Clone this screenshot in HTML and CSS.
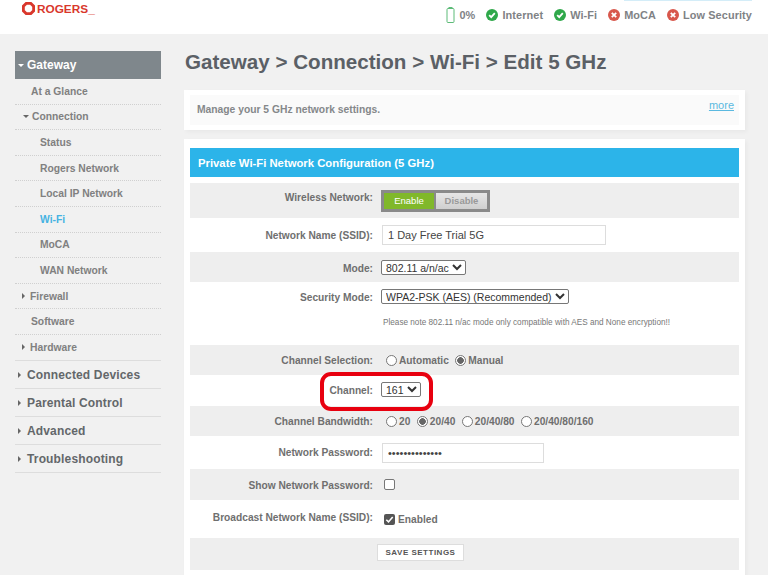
FILE: index.html
```html
<!DOCTYPE html>
<html lang="en">
<head>
<meta charset="utf-8">
<title>Gateway &gt; Connection &gt; Wi-Fi &gt; Edit 5 GHz</title>
<link rel="stylesheet" href="styles.css">
</head>
<body>
<header class="top">
  <div class="logo">
    <svg class="logo-mark" viewBox="0 0 14 14" width="13" height="13"><path d="M4.500 1.500h5L12.500 4.500v5L9.500 12.500h-5L1.500 9.500v-5z" fill="none" stroke="#d9372c" stroke-width="3"/></svg>
    <span class="logo-text">ROGERS_</span>
  </div>
  <div class="top-right">
    <div class="top-links"></div>
    <div class="status">
      <span class="stat">
        <svg viewBox="0 0 9 17" width="9" height="17"><path d="M2.500 .5h4M1 2.500q0-1 1-1h5q1 0 1 1v12q0 1-1 1H2q-1 0-1-1z" fill="none" stroke="#5dbb78" stroke-width="1"/></svg>
        0%
      </span>
      <span class="stat">
        <svg viewBox="0 0 12 12" width="12" height="12"><circle cx="6" cy="6" r="6" fill="#2fa84a"/><path d="M3.200 6.200l2 2 3.600-4" fill="none" stroke="#fff" stroke-width="1.800"/></svg>
        Internet
      </span>
      <span class="stat">
        <svg viewBox="0 0 12 12" width="12" height="12"><circle cx="6" cy="6" r="6" fill="#2fa84a"/><path d="M3.200 6.200l2 2 3.600-4" fill="none" stroke="#fff" stroke-width="1.800"/></svg>
        Wi-Fi
      </span>
      <span class="stat">
        <svg viewBox="0 0 12 12" width="12" height="12"><circle cx="6" cy="6" r="6" fill="#d8574c"/><path d="M3.800 3.800l4.400 4.400M8.200 3.800l-4.400 4.400" fill="none" stroke="#fff" stroke-width="1.800"/></svg>
        MoCA
      </span>
      <span class="stat">
        <svg viewBox="0 0 12 12" width="12" height="12"><circle cx="6" cy="6" r="6" fill="#d8574c"/><path d="M3.800 3.800l4.400 4.400M8.200 3.800l-4.400 4.400" fill="none" stroke="#fff" stroke-width="1.800"/></svg>
        Low Security
      </span>
    </div>
  </div>
</header>
<div class="page">
  <nav class="side">
    <div class="nav-head"><span class="arrow-down light"></span>Gateway</div>
    <a class="nav-1 dotted">At a Glance</a>
    <a class="nav-1 dotted"><span class="arrow-down"></span>Connection</a>
    <a class="nav-2 dotted">Status</a>
    <a class="nav-2 dotted">Rogers Network</a>
    <a class="nav-2 dotted">Local IP Network</a>
    <a class="nav-2 dotted current">Wi-Fi</a>
    <a class="nav-2 dotted">MoCA</a>
    <a class="nav-2 dotted">WAN Network</a>
    <a class="nav-1 dotted"><span class="arrow-right"></span>Firewall</a>
    <a class="nav-1 dotted">Software</a>
    <a class="nav-1 solid"><span class="arrow-right"></span>Hardware</a>
    <a class="nav-top"><span class="arrow-right"></span>Connected Devices</a>
    <a class="nav-top"><span class="arrow-right"></span>Parental Control</a>
    <a class="nav-top"><span class="arrow-right"></span>Advanced</a>
    <a class="nav-top"><span class="arrow-right"></span>Troubleshooting</a>
  </nav>
  <main class="main">
    <h1 class="title">Gateway &gt; Connection &gt; Wi-Fi &gt; Edit 5 GHz</h1>
    <section class="card info">
      <div class="info-inner">
        <span>Manage your 5 GHz network settings.</span>
        <a class="more">more</a>
      </div>
    </section>
    <section class="card form">
      <h2 class="form-head">Private Wi-Fi Network Configuration (5 GHz)</h2>
      <div class="row r-wireless alt">
        <span class="label">Wireless Network:</span>
        <span class="toggle"><span class="on">Enable</span><span class="off">Disable</span></span>
      </div>
      <div class="row r-ssid">
        <span class="label">Network Name (SSID):</span>
        <input class="text wide" type="text" value="1 Day Free Trial 5G">
      </div>
      <div class="row r-mode alt">
        <span class="label">Mode:</span>
        <select class="sel"><option>802.11 a/n/ac</option></select>
      </div>
      <div class="row r-sec">
        <span class="label">Security Mode:</span>
        <div class="sec-val">
          <select class="sel"><option>WPA2-PSK (AES) (Recommended)</option></select>
          <p class="note">Please note 802.11 n/ac mode only compatible with AES and None encryption!!</p>
        </div>
      </div>
      <div class="row r-sel alt">
        <span class="label">Channel Selection:</span>
        <span class="opts">
          <label class="opt"><span class="radio"></span>Automatic</label>
          <label class="opt"><span class="radio on"></span>Manual</label>
        </span>
      </div>
      <div class="row r-chan">
        <span class="label">Channel:</span>
        <select class="sel"><option>161</option></select>
        <span class="highlight"></span>
      </div>
      <div class="row r-band alt">
        <span class="label">Channel Bandwidth:</span>
        <span class="opts">
          <label class="opt"><span class="radio"></span>20</label>
          <label class="opt"><span class="radio on"></span>20/40</label>
          <label class="opt"><span class="radio"></span>20/40/80</label>
          <label class="opt"><span class="radio"></span>20/40/80/160</label>
        </span>
      </div>
      <div class="row r-pass">
        <span class="label">Network Password:</span>
        <input class="text narrow" type="password" value="aaaaaaaaaaaaaa">
      </div>
      <div class="row r-show alt">
        <span class="label">Show Network Password:</span>
        <span class="check"></span>
      </div>
      <div class="row r-broad">
        <span class="label">Broadcast Network Name (SSID):</span>
        <span class="check-wrap">
          <svg class="checked" viewBox="0 0 11 11" width="11" height="11"><rect width="11" height="11" rx="2" fill="#555"/><path d="M2.300 5.700l2.200 2.200 4.200-5" fill="none" stroke="#fff" stroke-width="1.600"/></svg>
          <span class="opt-text">Enabled</span>
        </span>
      </div>
      <div class="row r-save alt">
        <button class="save" type="button">SAVE SETTINGS</button>
      </div>
    </section>
  </main>
</div>
</body>
</html>
```

FILE: styles.css
```css
* { box-sizing: border-box; }
html, body { margin: 0; height: 575px; overflow: hidden; }
body { background: #f1f1f1; font-family: "Liberation Sans", Arial, sans-serif; color: #666; }

.top { height: 34px; background: #fff; display: flex; justify-content: space-between; padding: 0 16px 0 22px; }
.logo { display: flex; align-items: center; height: 17px; gap: 2px; }
.logo-mark { display: block; }
.logo-text { font: 700 11.800px "Liberation Sans", sans-serif; color: #d9372c; }
.top-right { display: flex; flex-direction: column; align-items: flex-end; }
.top-links { width: 128px; height: 1px; background: #d4edf8; }
.status { display: flex; gap: 11px; height: 28px; align-items: center; font-size: 10.900px; font-weight: 700; color: #808285; letter-spacing: .1px; }
.stat { display: flex; align-items: center; gap: 4px; white-space: nowrap; }

.page { display: flex; padding: 17px 23px 0 15px; gap: 23px; }
.side { width: 146px; flex: none; font-weight: 700; }
.side a { display: flex; align-items: center; color: #808080; }
.nav-head { height: 28px; background: #7f878c; color: #fff; font-size: 12px; display: flex; align-items: center; padding-left: 3px; }
.nav-1, .nav-2 { height: 25.600px; font-size: 10.300px; position: relative; }
.nav-1 { padding-left: 16px; }
.nav-2 { padding-left: 25px; }
.dotted { border-bottom: 1px dotted #d0d0d0; }
.solid { border-bottom: 1px solid #ddd; }
.side a.current { color: #45b3e2; }
.side a.nav-top { height: 28px; font-size: 12px; letter-spacing: .15px; padding: 1px 0 0 3px; border-bottom: 1px solid #ddd; color: #63676a; }
.arrow-down, .arrow-right { display: inline-block; width: 0; height: 0; flex: none; }
.arrow-down { border: 3px solid transparent; border-top: 3px solid #666; border-bottom: 0; margin-right: 3px; }
.arrow-down.light { border-top-color: #fff; margin-right: 3px; }
.arrow-right { border: 3px solid transparent; border-left: 3px solid #666; border-right: 0; margin-right: 6px; }
.nav-1 .arrow-down { margin-left: -8px; }
.nav-1 .arrow-right { margin-left: -9px; margin-right: 5px; }

.main { width: 561px; flex: none; }
.title { margin: 0; height: 39px; padding: 0 0 0 1px; font-size: 20.600px; line-height: 21px; color: #5b6066; font-weight: 700; }
.card { background: #fff; box-shadow: 2px 2px 4px rgba(0,0,0,.04); }
.info { height: 40px; padding: 5px 6px; }
.info-inner { height: 30px; background: #fafafa; display: flex; justify-content: space-between; padding: 0 5px 0 7px; font-size: 10.300px; font-weight: 700; color: #85888a; align-items: center; line-height: 28px; }
.more { color: #5bb9e0; text-decoration: underline; font-weight: 400; font-size: 11px; line-height: 13px; margin-bottom: 10px; }
.form { margin-top: 9px; height: 440px; padding: 9px 6px 0; }
.form-head { margin: 0 0 6px; height: 29px; background: #2cb4e9; color: #fff; font-size: 11.300px; line-height: 30px; padding-left: 8px; font-weight: 700; }
.row { display: grid; grid-template-columns: 183px auto; column-gap: 8px; justify-content: start; align-items: center; position: relative; font-size: 10.200px; }
.alt { background: #eeeeee; }
.label { text-align: right; font-weight: 700; color: #6f6f6f; white-space: nowrap; }

.r-wireless { height: 35px; }
.r-wireless .label { margin-bottom: 7px; }
.r-ssid { height: 34px; }
.r-mode { height: 30px; }
.r-sec { height: 63px; align-items: start; padding-top: 7px; }
.r-sec .label { padding-top: 3px; }
.r-mode .label { padding-top: 2px; }
.r-sel { height: 30px; }
.r-chan { height: 31px; }
.r-chan .sel { margin-bottom: 2px; }
.r-band { height: 30px; }
.r-band .label { padding-top: 1px; }
.r-pass { height: 33px; }
.r-show { height: 31px; }
.r-show .label { padding-top: 1px; }
.r-broad { height: 38px; }
.r-broad .label { margin-bottom: 3px; }
.r-save { height: 32px; grid-template-columns: auto; }

.toggle { display: flex; width: 109px; height: 22px; border: 3px solid #8a8a8a; background: #8a8a8a; gap: 2px; font-size: 9.500px; text-align: center; line-height: 16px; }
.toggle .on { background: #80b82a; color: #fff; width: 50px; flex: none; }
.toggle .off { background: linear-gradient(#e6e6e6, #cfcfcf); color: #999; flex: 1; font-weight: 700; }
.text { font: 400 11px "Liberation Sans", sans-serif; color: #444; border: 1px solid #ddd; background: #fff; height: 20px; padding: 0 5px; margin: 0 0 0 1px; outline: 0; }
.wide { width: 224px; }
.narrow { width: 162px; }
.sel { font: 400 10.500px "Liberation Sans", sans-serif; color: #333; height: 15px; padding: 0; margin: 0; background: #fff; border: 1px solid #777; border-radius: 2px; justify-self: start; display: block; }
.sec-val { padding-top: 0; }
.note { margin: 14px 0 0 2px; font-size: 8.200px; font-weight: 400; color: #777; white-space: nowrap; }
.opts { display: flex; gap: 6.500px; font-weight: 700; color: #6f6f6f; margin-left: 5px; }
.opt { display: flex; align-items: center; gap: 2px; }
.radio { width: 11px; height: 11px; border: 1px solid #777; border-radius: 50%; background: #fff; display: block; }
.radio.on { background: radial-gradient(circle, #666 0 3px, #fff 3.600px); }
.highlight { position: absolute; z-index: 2; left: 130px; top: -3px; width: 113px; height: 39px; border: 4px solid #e8000f; border-radius: 11px; }
.check { width: 11px; height: 11px; border: 1px solid #777; border-radius: 2px; background: #fff; margin-left: 3px; }
.check-wrap { display: flex; align-items: center; gap: 3px; margin-left: 3px; font-weight: 700; color: #6f6f6f; }
.checked { display: block; }
.save { font: 700 8px "Liberation Sans", sans-serif; letter-spacing: .5px; color: #555; background: #fff; border: 1px solid #ddd; height: 17px; width: 87px; padding: 0; margin: 0 0 3px 187px; }
```
